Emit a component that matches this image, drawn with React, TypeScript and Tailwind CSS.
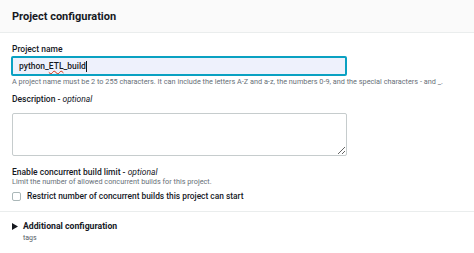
import React from "react";

export default function App() {
  return (
    <div className="w-[474px] h-[253px] bg-white overflow-hidden text-[#16191f] font-['Roboto',sans-serif]">
      <div className="h-[33px] bg-[#fafafa] border-b border-[#eaeded] flex items-center px-[12px]">
        <h2 className="text-[11px] font-bold leading-none">Project configuration</h2>
      </div>
      <div className="px-[12px] pt-[10px]">
        <div className="text-[8.5px] font-medium leading-[12px]">Project name</div>
        <div className="mt-[1px] -ml-px w-[336px] h-[20px] border-2 border-[#0aa1c2] bg-[#eef1fc] rounded-[2px] flex items-center pl-[6px]">
          <span className="text-[8.5px] font-medium">
            python_<span className="underline decoration-[#d13212] decoration-wavy decoration-1">ETL</span>_build
          </span>
          <span className="w-px h-[11px] bg-[#16191f]" />
        </div>
        <div className="mt-px text-[7.3px] text-[#687078] leading-[10px] whitespace-nowrap">
          A project name must be 2 to 255 characters. It can include the letters A-Z and a-z, the numbers 0-9, and the special characters - and _.
        </div>
        <div className="mt-[6px] text-[8.5px] font-medium leading-[12px]">
          Description - <i className="font-normal">optional</i>
        </div>
        <textarea className="mt-[8px] block w-[335px] h-[43px] border border-[#c6cccd] rounded-[2px] resize-y bg-white" />
        <div className="mt-[10px] text-[8.5px] font-medium leading-[12px]">
          Enable concurrent build limit - <i className="font-normal">optional</i>
        </div>
        <div className="-mt-px text-[7.3px] text-[#687078] leading-[9px]">Limit the number of allowed concurrent builds for this project.</div>
        <div className="mt-[4px] flex items-center gap-[6px]">
          <span className="w-[9px] h-[9px] border border-[#aab7b8] rounded-[2px] bg-white" />
          <span className="text-[8.4px] font-medium leading-[12px]">Restrict number of concurrent builds this project can start</span>
        </div>
      </div>
      <div className="mt-[9px] border-t border-[#eaeded]" />
      <div className="px-[12px] pt-[8px]">
        <div className="flex items-center gap-[5px]">
          <svg width="6" height="7" viewBox="0 0 6 7">
            <polygon points="0,0 6,3.5 0,7" fill="#16191f" />
          </svg>
          <span className="text-[8.7px] font-bold leading-[12px]">Additional configuration</span>
        </div>
        <div className="pl-[11px] mt-px text-[7px] text-[#545b64] leading-[10px]">tags</div>
      </div>
    </div>
  );
}
